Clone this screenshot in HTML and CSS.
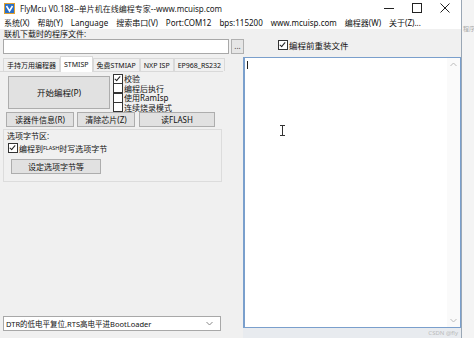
FILE: index.html
```html
<!DOCTYPE html>
<html>
	<head>
		<meta charset="UTF-8">
		<title>FlyMcu</title>
		<link rel="stylesheet" href="styles.css">
	</head>
	<body>
		<div id="desk">
			<div id="win">
				<div class="titlebar">
					<svg class="appicon" width="11" height="11" viewBox="0 0 11 11">
						<rect x="0.5" y="0.5" width="10" height="10" fill="#2a6fc9" stroke="#e0a030"/>
						<path d="M2.5 3 L5.5 8 L8.5 3" fill="none" stroke="#fff" stroke-width="1.6"/>
					</svg>
					<span class="title">FlyMcu V0.188--单片机在线编程专家--www.mcuisp.com</span>
					<div class="winbtns">
						<svg width="10" height="10" viewBox="0 0 10 10"><path d="M0 5.5 H10" stroke="#222" stroke-width="1"/></svg>
						<svg width="10" height="10" viewBox="0 0 10 10"><rect x="0.5" y="0.5" width="9" height="9" fill="none" stroke="#222"/></svg>
						<svg width="10" height="10" viewBox="0 0 10 10"><path d="M0.5 0.5 L9.5 9.5 M9.5 0.5 L0.5 9.5" stroke="#222" stroke-width="1"/></svg>
					</div>
				</div>
				<ul class="menubar">
					<li>系统(X)</li>
					<li>帮助(Y)</li>
					<li>Language</li>
					<li>搜索串口(V)</li>
					<li>Port:COM12</li>
					<li>bps:115200</li>
					<li>www.mcuisp.com</li>
					<li>编程器(W)</li>
					<li>关于(Z)...</li>
				</ul>
				<div class="filelabel">联机下载时的程序文件:</div>
				<div class="filerow">
					<div class="filebox"></div>
					<div class="browse">...</div>
					<label class="chk reload"><span class="box on"></span>编程前重装文件</label>
				</div>
				<div class="main">
					<div class="left">
						<ul class="tabs">
							<li>手持万用编程器</li>
							<li class="active">STMISP</li>
							<li>免费STMIAP</li>
							<li>NXP ISP</li>
							<li>EP968_RS232</li>
						</ul>
						<div class="panel">
							<div class="toprow">
								<div class="btn big">开始编程(P)</div>
								<div class="opts">
									<label class="chk"><span class="box on"></span>校验</label>
									<label class="chk"><span class="box"></span>编程后执行</label>
									<label class="chk"><span class="box"></span>使用RamIsp</label>
									<label class="chk"><span class="box"></span>连续烧录模式</label>
								</div>
							</div>
							<div class="btnrow">
								<div class="btn b1">读器件信息(R)</div>
								<div class="btn b2">清除芯片(Z)</div>
								<div class="btn b3">读FLASH</div>
							</div>
							<div class="group">
								<div class="glabel">选项字节区:</div>
								<label class="chk gchk"><span class="box on"></span>编程到<small>FLASH</small>时写选项字节</label>
								<div class="btn b4">设定选项字节等</div>
							</div>
						</div>
						<div class="combo">
							<span>DTR的低电平复位,RTS高电平进BootLoader</span>
							<svg width="7" height="5" viewBox="0 0 7 5"><path d="M0.5 1 L3.5 4 L6.5 1" fill="none" stroke="#888"/></svg>
						</div>
					</div>
					<div class="right">
						<div class="log">
							<span class="caret"></span>
							<svg class="ibeam" width="7" height="11" viewBox="0 0 7 11"><path d="M1 0.5 H6 M3.5 0.5 V10.5 M1 10.5 H6" stroke="#333" fill="none"/></svg>
							<div class="vscroll">
								<svg width="7" height="5" viewBox="0 0 7 5"><path d="M0.5 4 L3.5 1 L6.5 4" fill="none" stroke="#bbb"/></svg>
								<svg width="7" height="5" viewBox="0 0 7 5"><path d="M0.5 1 L3.5 4 L6.5 1" fill="none" stroke="#bbb"/></svg>
							</div>
						</div>
						<div class="foot">CSDN @fly</div>
					</div>
				</div>
			</div>
			<div class="behind">程序</div>
		</div>
	</body>
</html>
```

FILE: styles.css
```css
body, ul {
	padding: 0;
	margin: 0;
}
li {
	list-style: none;
}
body {
	width: 474px;
	height: 338px;
	overflow: hidden;
	background: #f4f4f4;
	font-family: "Noto Sans", "Noto Sans CJK SC", sans-serif;
	font-size: 8px;
	color: #111;
}

#desk {
	display: flex;
	height: 338px;
}
#win {
	width: 461px;
	height: 338px;
	background: #f0f0f0;
	border-right: 1px solid #9aa7b5;
	display: flex;
	flex-direction: column;
}
.behind {
	padding: 24px 0 0 1px;
	color: #aaa;
	font-size: 6px;
	white-space: nowrap;
	width: 12px;
}

.titlebar {
	height: 16px;
	background: #fff;
	display: flex;
	align-items: center;
}
.appicon {
	margin: 0 5px 0 4px;
}
.title {
	font-size: 8px;
	color: #222;
	white-space: nowrap;
}
.winbtns {
	margin-left: auto;
	display: flex;
	gap: 18px;
	padding-right: 11px;
}

.menubar {
	height: 13px;
	background: #fff;
	display: flex;
	align-items: center;
	padding-left: 4px;
	white-space: nowrap;
}
.menubar li {
	margin-right: 8px;
}

.filelabel {
	height: 10px;
	line-height: 10px;
	padding-left: 4px;
}
.filerow {
	display: flex;
	align-items: center;
	height: 15px;
	padding-left: 3px;
}
.filebox {
	width: 224px;
	height: 13px;
	background: #fff;
	border: 1px solid #a8a8a8;
}
.browse {
	width: 11px;
	height: 13px;
	margin-left: 2px;
	border: 1px solid #b0b0b0;
	background: #e6e6e6;
	font-size: 8px;
	line-height: 12px;
	text-align: center;
	color: #444;
}

.chk {
	display: flex;
	align-items: center;
	white-space: nowrap;
}
.box {
	width: 8px;
	height: 8px;
	border: 1px solid #333;
	background: #fff;
	margin-right: 1px;
	position: relative;
}
.box.on::after {
	content: "";
	position: absolute;
	left: 2px;
	top: 0px;
	width: 2px;
	height: 5px;
	border: solid #222;
	border-width: 0 1.2px 1.2px 0;
	transform: rotate(40deg);
}
.reload {
	margin-left: 34px;
	margin-top: -3px;
	font-size: 8.5px;
}

.main {
	display: flex;
	margin-top: 3px;
	flex: 1;
}
.left {
	width: 244px;
	display: flex;
	flex-direction: column;
}
.tabs {
	display: flex;
	height: 14px;
	padding-left: 3px;
	font-size: 7px;
	white-space: nowrap;
	border-bottom: 1px solid #d9d9d9;
	width: 220px;
}
.tabs li {
	padding: 0 3px;
	line-height: 13px;
	border: 1px solid #d9d9d9;
	border-bottom: none;
	margin-top: 1px;
	background: #f0f0f0;
}
.tabs li.active {
	background: #fff;
	margin-top: -1px;
	line-height: 15px;
	margin-bottom: -1px;
}

.panel {
	padding-top: 2px;
}
.toprow {
	display: flex;
}
.btn {
	background: #e1e1e1;
	border: 1px solid #adadad;
	text-align: center;
	font-size: 8px;
	white-space: nowrap;
}
.big {
	width: 100px;
	height: 31px;
	line-height: 31px;
	margin: 2px 0 0 8px;
	font-size: 8.5px;
}
.opts {
	margin-left: 3px;
	font-size: 8px;
}
.opts .chk {
	height: 9.5px;
}
.btnrow {
	display: flex;
}
.btnrow .btn {
	height: 13px;
	line-height: 13px;
}
.b1 {
	width: 66px;
	margin-left: 6px;
}
.b2 {
	width: 56px;
	margin-left: 3px;
}
.b3 {
	width: 74px;
	margin-left: 4px;
}

.group {
	width: 214px;
	height: 51px;
	margin: 2px 0 0 3px;
	border: 1px solid #dcdcdc;
	padding-left: 3px;
}
.glabel {
	font-size: 8px;
	line-height: 11px;
}
.gchk {
	font-size: 8px;
	height: 12px;
	margin-top: 1px;
	margin-left: 1px;
}
.gchk small {
	font-size: 5.5px;
}
.b4 {
	width: 88px;
	height: 13px;
	line-height: 13px;
	margin: 5px 0 0 4px;
}

.combo {
	margin: auto 0 7px 3px;
	height: 13px;
	border: 1px solid #a8a8a8;
	background: #fff;
	display: flex;
	align-items: center;
	justify-content: space-between;
	padding: 0 7px 0 2px;
	width: 207px;
	font-size: 7.5px;
	white-space: nowrap;
}

.right {
	display: flex;
	flex-direction: column;
}
.log {
	width: 215px;
	height: 269px;
	background: #fff;
	border: 1px solid #7a9fcc;
	border-width: 1px 1px 1px 2px;
	position: relative;
}
.caret {
	position: absolute;
	left: 2px;
	top: 3px;
	width: 1px;
	height: 8px;
	background: #222;
}
.ibeam {
	position: absolute;
	left: 34px;
	top: 67px;
}
.vscroll {
	position: absolute;
	right: 0;
	top: 0;
	bottom: 0;
	width: 13px;
	background: #fafafa;
	display: flex;
	flex-direction: column;
	justify-content: space-between;
	align-items: center;
	padding: 4px 0;
	box-sizing: border-box;
}
.foot {
	flex: 1;
	text-align: right;
	font-size: 6px;
	line-height: 10px;
	color: #bbb;
	padding-right: 3px;
	background: #e8ebef;
}
```
